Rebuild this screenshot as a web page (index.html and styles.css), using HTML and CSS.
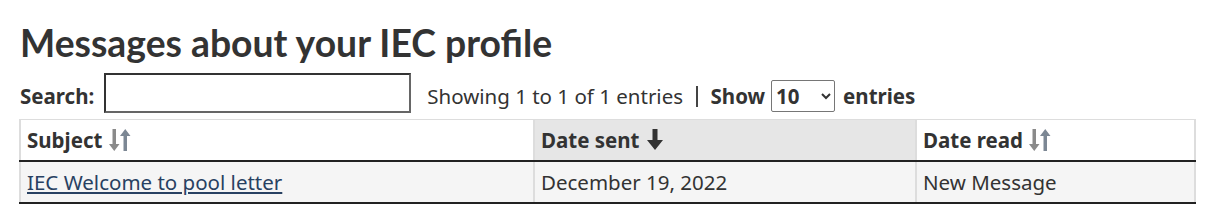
FILE: index.html
```html
<!DOCTYPE html>
<html lang="en">
  <head>
    <meta charset="UTF-8" />
    <title>Messages about your IEC profile</title>
    <link rel="stylesheet" href="styles.css">
  </head>
  <body>
    <h1>Messages about your IEC profile</h1>

    <div class="toolbar">
      <label for="search" class="search-label">Search:</label>
      <input type="search" id="search" class="search-input" />
      <span class="info">Showing 1 to 1 of 1 entries</span>
      <span class="sep"></span>
      <label for="length" class="bold">Show</label>
      <select id="length" class="length">
        <option>10</option>
        <option>25</option>
        <option>50</option>
      </select>
      <span class="bold">entries</span>
    </div>

    <table class="messages">
      <colgroup>
        <col class="col-subject" />
        <col class="col-sent" />
        <col class="col-read" />
      </colgroup>
      <thead>
        <tr>
          <th>Subject
            <svg class="sort" width="22" height="24" viewBox="0 0 22 24">
              <path d="M3.5 1h3.5v15h3.5L5.25 23 0 16h3.5z" fill="#8a8a8a"/>
              <path d="M14.5 23h3.5V8h3.5L16.25 1 11 8h3.5z" fill="#7c8794"/>
            </svg>
          </th>
          <th class="sorted">Date sent
            <svg class="sort" width="18" height="24" viewBox="0 0 18 24">
              <path d="M6.5 1h5v11h5.5L9 22 1 12h5.5z" fill="#333"/>
            </svg>
          </th>
          <th>Date read
            <svg class="sort" width="22" height="24" viewBox="0 0 22 24">
              <path d="M3.5 1h3.5v15h3.5L5.25 23 0 16h3.5z" fill="#8a8a8a"/>
              <path d="M14.5 23h3.5V8h3.5L16.25 1 11 8h3.5z" fill="#7c8794"/>
            </svg>
          </th>
        </tr>
      </thead>
      <tbody>
        <tr>
          <td><a href="#">IEC Welcome to pool letter</a></td>
          <td>December 19, 2022</td>
          <td>New Message</td>
        </tr>
      </tbody>
    </table>
  </body>
</html>
```

FILE: styles.css
```css
body {
  margin: 0;
  padding: 0 11px 0 19px;
  font-family: "Noto Sans", sans-serif;
  font-size: 20.5px;
  color: #333;
}

h1 {
  font-family: Lato, sans-serif;
  font-weight: 700;
  font-size: 37.3px;
  margin: 21px 0 0 1px;
  line-height: 44px;
}

.toolbar {
  display: flex;
  align-items: center;
  margin-top: 8px;
  height: 40px;
}

.toolbar > span,
.toolbar > label {
  position: relative;
  top: 3px;
}

.search-label,
.bold {
  font-weight: 700;
}

.search-label {
  margin-left: 1px;
}

.search-input {
  width: 303px;
  height: 36px;
  margin: 0 16px 0 10px;
  padding: 0;
  border: 2px solid #333;
  border-right-color: #666;
  border-bottom-color: #666;
  box-sizing: content-box;
}

.sep {
  width: 1.5px;
  height: 21px;
  margin: 0 13px 0 13px;
  background: #444;
}

.length {
  margin: 6px 8px 0 6px;
  width: 64px;
  height: 32px;
  font-family: "Noto Sans", sans-serif;
  font-size: 20.5px;
  font-weight: 700;
  color: #333;
  border: 1px solid #767676;
  border-radius: 2px;
  background: #fff;
}

.messages {
  margin-top: 6px;
  width: 1177px;
  table-layout: fixed;
  border-collapse: collapse;
}

.col-subject {
  width: 514px;
}

.col-sent {
  width: 382px;
}

.messages th,
.messages td {
  text-align: left;
  padding: 0 6px;
  border-left: 2px solid #ddd;
  border-right: 2px solid #ddd;
}

.messages th {
  height: 40px;
  border-top: 1px solid #ddd;
  border-bottom: 2px solid #222;
  font-weight: 700;
}

.messages td {
  height: 40px;
  background: #f5f5f5;
  border-bottom: 2px solid #222;
}

.messages th.sorted {
  background: #e6e6e6;
}

.sort {
  vertical-align: -4px;
  margin-left: 1px;
}

.messages a {
  color: #284162;
}
```
